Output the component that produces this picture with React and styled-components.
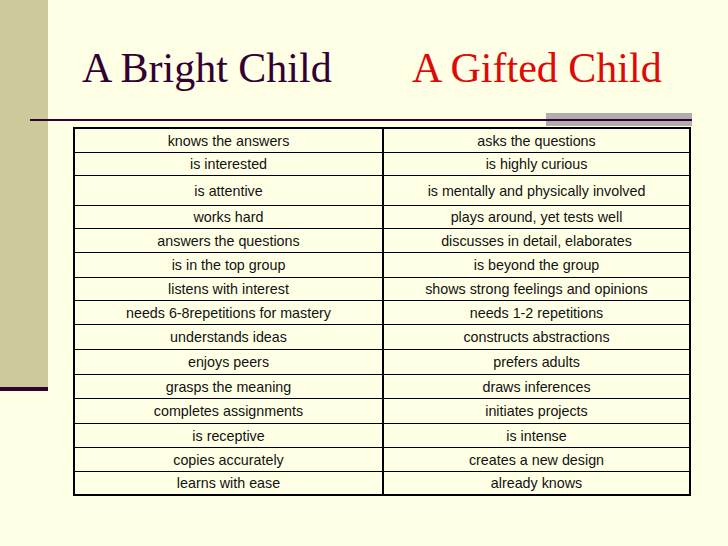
import React from "react";
import styled, { createGlobalStyle } from "styled-components";

const Global = createGlobalStyle`
  html, body { margin: 0; padding: 0; background: #FFFFE5; }
  body { width: 728px; height: 546px; overflow: hidden; }
`;

const Slide = styled.div`
  display: flex;
  width: 728px;
  height: 546px;
  background: #FFFFE5;
`;

const Sidebar = styled.div`
  width: 48px;
  flex: none;
  display: flex;
  flex-direction: column;
`;

const Stripe = styled.div`
  height: 387px;
  background: #CCC99B;
`;

const Band = styled.div`
  height: 4px;
  background: #330033;
`;

const Main = styled.div`
  flex: 1;
  display: flex;
  flex-direction: column;
`;

const TitleRow = styled.div`
  display: grid;
  grid-template-columns: 330px auto;
  padding: 43px 0 0 34px;
  height: 51px;
`;

const Title = styled.h1`
  margin: 0;
  font-family: "Liberation Serif", "Times New Roman", serif;
  font-weight: normal;
  font-size: 42px;
  line-height: 50px;
  white-space: nowrap;
  color: ${(p) => (p.$red ? "#DD0A0A" : "#330033")};
`;

const RuleBar = styled.div`
  margin: 19px 0 0 -18px;
  width: 662px;
  height: 13px;
  display: flex;
  flex-direction: column;
  justify-content: center;
  align-items: flex-end;
  background: linear-gradient(to right, transparent 516px, #B1ADAD 516px);
`;

const Rule = styled.div`
  width: 100%;
  height: 2px;
  background: #330033;
`;

const Table = styled.div`
  margin: 1px 0 0 25px;
  width: 618px;
  box-sizing: border-box;
  border: 2px solid #000;
  display: flex;
  flex-direction: column;
`;

const Row = styled.div`
  display: flex;
  box-sizing: border-box;
  height: ${(p) => p.$h}px;
  border-top: ${(p) => (p.$first ? "none" : "1px solid #000")};
`;

const Cell = styled.div`
  box-sizing: border-box;
  display: flex;
  align-items: center;
  justify-content: center;
  font-family: "Liberation Sans", Arial, sans-serif;
  font-size: 14.3px;
  color: #111;
  white-space: nowrap;
  ${(p) => (p.$left ? "width: 309px; border-right: 2px solid #000;" : "flex: 1;")}
`;

const rows = [
  ["knows the answers", "asks the questions", 23],
  ["is interested", "is highly curious", 23],
  ["is attentive", "is mentally and physically involved", 30],
  ["works hard", "plays around, yet tests well", 23],
  ["answers the questions", "discusses in detail, elaborates", 24],
  ["is in the top group", "is beyond the group", 25],
  ["listens with interest", "shows strong feelings and opinions", 23],
  ["needs 6-8repetitions for mastery", "needs 1-2 repetitions", 24],
  ["understands ideas", "constructs abstractions", 25],
  ["enjoys peers", "prefers adults", 25],
  ["grasps the meaning", "draws inferences", 24],
  ["completes assignments", "initiates projects", 25],
  ["is receptive", "is intense", 24],
  ["copies accurately", "creates a new design", 24],
  ["learns with ease", "already knows", 23],
];

export default function App() {
  return (
    <>
      <Global />
      <Slide>
        <Sidebar>
          <Stripe />
          <Band />
        </Sidebar>
        <Main>
          <TitleRow>
            <Title>A Bright Child</Title>
            <Title $red>A Gifted Child</Title>
          </TitleRow>
          <RuleBar>
            <Rule />
          </RuleBar>
          <Table>
            {rows.map(([a, b, h], i) => (
              <Row key={i} $h={h} $first={i === 0}>
                <Cell $left>{a}</Cell>
                <Cell>{b}</Cell>
              </Row>
            ))}
          </Table>
        </Main>
      </Slide>
    </>
  );
}
